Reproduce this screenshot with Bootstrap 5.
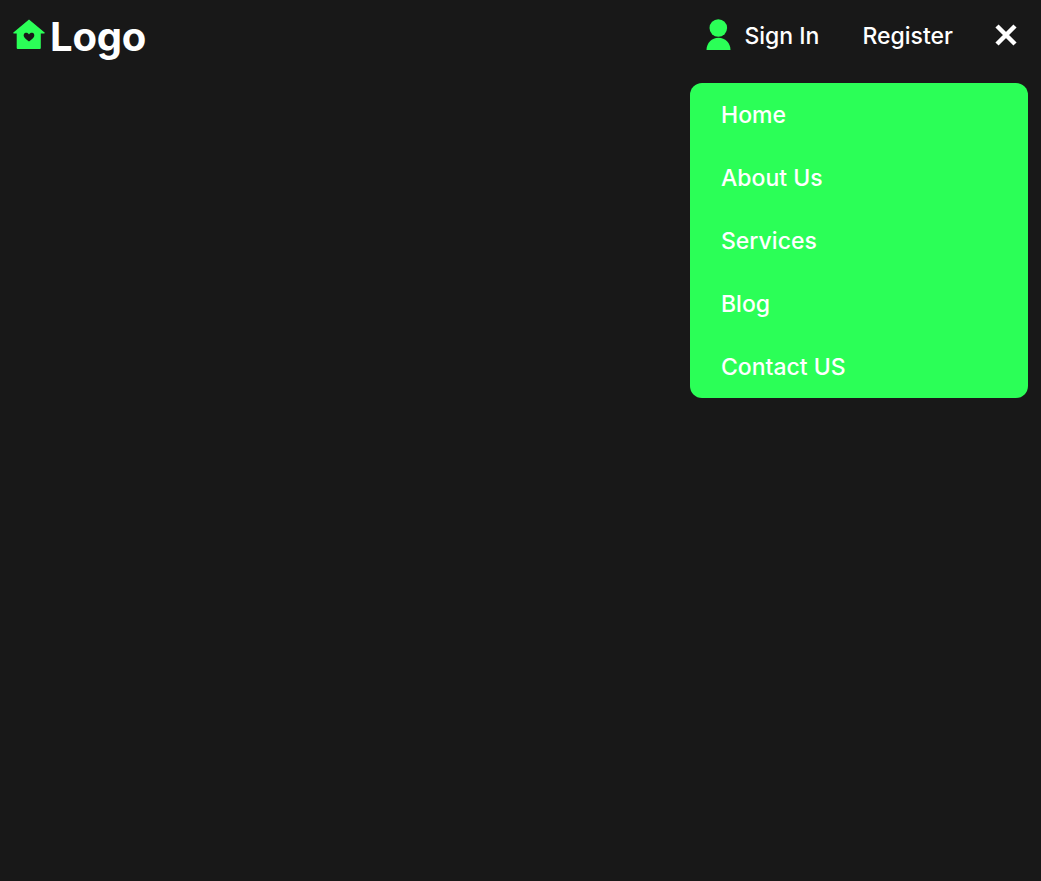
<!doctype html>
<html lang="en">
<head>
<meta charset="utf-8">
<title>Logo</title>
<link rel="stylesheet" href="https://cdn.jsdelivr.net/npm/bootstrap@5.3.0/dist/css/bootstrap.min.css">
<style>
html,body{height:100%}
body{background:#181818;font-family:Inter,"Liberation Sans",sans-serif;color:#fff}
.topbar{height:70px;padding:0 13px;position:relative}
.brand-link{font-size:40px;font-weight:700;color:#fff;text-decoration:none;line-height:1;letter-spacing:-.2px}
.brand-link svg{width:32px;height:32px;margin-right:5px}
.brand-text{padding-top:3px}
.top-link{font-size:23px;font-weight:500;color:#fff;text-decoration:none;line-height:1}
.top-text{padding-top:2px}
.user-ico{width:26px;height:32px;margin-right:13px}
.signin{margin-right:43px}
.close-btn{background:none;border:0;padding:0;margin:0 10px 0 41px;line-height:0}
.close-btn svg{width:24px;height:24px}
.side-menu{position:absolute;top:83px;left:690px;width:338px;height:315px;background:#2bff57;border-radius:12px;list-style:none;margin:0;padding:0}
.side-menu a{display:block;height:63px;line-height:65px;padding-left:31px;color:#fff;font-size:23px;font-weight:500;text-decoration:none}
</style>
</head>
<body>
<nav class="topbar d-flex align-items-center justify-content-between">
  <a class="brand-link d-flex align-items-center" href="#">
    <svg viewBox="0 0 32 32" aria-hidden="true"><path fill="#2bff57" fill-rule="evenodd" d="M16 .5 31.600 13.600c.4.4.2.9-.4.9H27.800V29a1 1 0 0 1-1 1H4.700a1 1 0 0 1-1-1V14.500H.8c-.6 0-.8-.5-.4-.9ZM16 15.500c-.8-1.500-2.200-2.100-3.500-1.700-1.600.5-2.200 2.200-1.600 3.700.6 1.600 2.900 3.500 5.100 5 2.200-1.500 4.500-3.400 5.100-5 .6-1.500 0-3.200-1.600-3.700-1.300-.4-2.700.2-3.500 1.700Z"/></svg>
    <span class="brand-text">Logo</span>
  </a>
  <div class="d-flex align-items-center">
    <a class="top-link signin d-flex align-items-center" href="#">
      <svg class="user-ico" viewBox="0 0 26 32" aria-hidden="true"><circle cx="13.300" cy="9" r="8.800" fill="#2bff57"/><path fill="#2bff57" d="M1.500 31C1.500 24 6.800 18.700 13.500 18.700S25.500 24 25.500 31Z"/></svg>
      <span class="top-text">Sign In</span>
    </a>
    <a class="top-link top-text" href="#">Register</a>
    <button class="close-btn" type="button" aria-label="Close">
      <svg viewBox="0 0 24 24" aria-hidden="true"><path d="M3 3 21 21M21 3 3 21" stroke="#fff" stroke-width="4.500" fill="none"/></svg>
    </button>
  </div>
</nav>
<ul class="side-menu">
  <li><a href="#">Home</a></li>
  <li><a href="#">About Us</a></li>
  <li><a href="#">Services</a></li>
  <li><a href="#">Blog</a></li>
  <li><a href="#">Contact US</a></li>
</ul>
<script src="https://cdn.jsdelivr.net/npm/bootstrap@5.3.0/dist/js/bootstrap.bundle.min.js"></script>
</body>
</html>
